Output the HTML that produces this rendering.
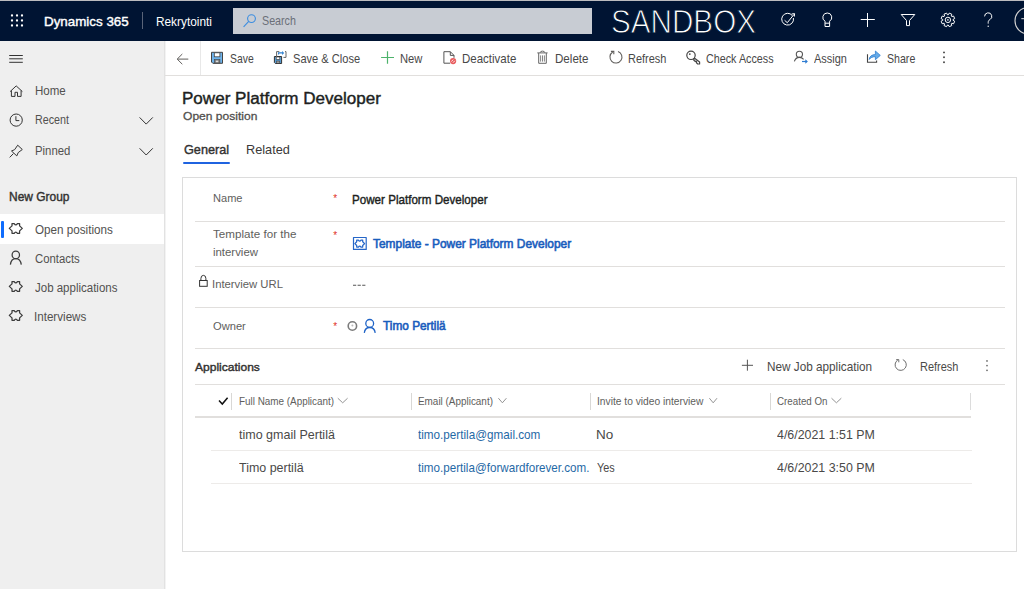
<!DOCTYPE html>
<html><head><meta charset="utf-8"><title>Power Platform Developer</title>
<style>
html,body{margin:0;padding:0;width:1024px;height:589px;overflow:hidden;background:#fff;font-family:"Liberation Sans",sans-serif;}
.a{position:absolute;}
.t{position:absolute;white-space:pre;line-height:normal;transform-origin:0 0;font-family:"Liberation Sans",sans-serif;}
svg{position:absolute;overflow:visible;}
</style></head><body>
<div class="a" style="left:0;top:0;width:1024px;height:1px;background:#bcbcbf"></div>
<div class="a" style="left:0;top:1px;width:1024px;height:40px;background:#001433"></div>
<div class="a" style="left:142px;top:12px;width:1px;height:17px;background:#5a6478"></div>
<div class="a" style="left:233px;top:8px;width:358.8px;height:25.6px;background:#c8ccd3"></div>
<div class="a" style="left:0;top:41px;width:164px;height:548px;background:#efefef"></div>
<div class="a" style="left:164px;top:41px;width:1px;height:548px;background:#e2e2e2"></div>
<div class="a" style="left:165px;top:41px;width:1px;height:548px;background:#f3f3f3"></div>
<div class="a" style="left:165px;top:75px;width:859px;height:1px;background:#e1dfdd"></div>
<div class="a" style="left:200px;top:41px;width:1px;height:34px;background:#e8e8e8"></div>
<div class="a" style="left:0;top:214px;width:164px;height:30px;background:#fff"></div>
<div class="a" style="left:1px;top:221px;width:3px;height:17px;background:#0f6cfd;border-radius:1px"></div>
<div class="a" style="left:183px;top:162px;width:46.6px;height:2px;background:#1f63e0;border-radius:1px"></div>
<div class="a" style="left:182px;top:177px;width:833px;height:373px;border:1px solid #dcdcdc"></div>
<div class="a" style="left:195px;top:221px;width:810px;height:1px;background:#e1dfdd"></div>
<div class="a" style="left:195px;top:266px;width:810px;height:1px;background:#e1dfdd"></div>
<div class="a" style="left:195px;top:307px;width:810px;height:1px;background:#e1dfdd"></div>
<div class="a" style="left:195px;top:348px;width:810px;height:1px;background:#e1dfdd"></div>
<div class="a" style="left:195px;top:384px;width:810px;height:1px;background:#e1dfdd"></div>
<div class="a" style="left:195px;top:416px;width:776px;height:2px;background:#e1dfdd"></div>
<div class="a" style="left:211px;top:450px;width:761px;height:1px;background:#edebe9"></div>
<div class="a" style="left:211px;top:483px;width:761px;height:1px;background:#edebe9"></div>
<div class="a" style="left:231px;top:393px;width:1px;height:17px;background:#d9d8d6"></div>
<div class="a" style="left:411px;top:393px;width:1px;height:17px;background:#d9d8d6"></div>
<div class="a" style="left:590px;top:393px;width:1px;height:17px;background:#d9d8d6"></div>
<div class="a" style="left:770px;top:393px;width:1px;height:17px;background:#d9d8d6"></div>
<div class="a" style="left:970px;top:393px;width:1px;height:17px;background:#dcdcdc"></div>
<svg width="1024" height="589" viewBox="0 0 1024 589" style="left:0;top:0">
<!-- waffle -->
<g fill="#fff">
<circle cx="12" cy="15.5" r="1.15"/><circle cx="17" cy="15.5" r="1.15"/><circle cx="22" cy="15.5" r="1.15"/>
<circle cx="12" cy="20.5" r="1.15"/><circle cx="17" cy="20.5" r="1.15"/><circle cx="22" cy="20.5" r="1.15"/>
<circle cx="12" cy="25.5" r="1.15"/><circle cx="17" cy="25.5" r="1.15"/><circle cx="22" cy="25.5" r="1.15"/>
</g>
<!-- search icon -->
<g fill="none" stroke="#3b8de0" stroke-width="1.1">
<circle cx="251.5" cy="18.6" r="3.9"/>
<path d="M248.7 21.4 L243.6 26.9"/>
</g>
<!-- header icons -->
<g fill="none" stroke="#fff" stroke-width="1">
<path d="M792.3 15.6 A5.9 5.9 0 1 0 793.4 18"/>
<path d="M784.6 20.3 L787.3 22.7 L794.2 14.2"/>
<path d="M791.6 14 L794.6 13.6 L794.3 16.6"/>
<path d="M827.3 13 a4.4 4.4 0 0 1 2.3 8.2 v5.3 h-4.6 v-5.3 a4.4 4.4 0 0 1 2.3 -8.2 z"/>
<path d="M825 23.2 h4.6"/>
<path d="M867.5 13 V27 M860.7 19.5 H874.8"/>
<path d="M901.2 14.5 H914.8 L909.5 20.5 V25.6 H906.5 V20.5 Z"/>
<path d="M984.6 16.4 a3.6 3.6 0 1 1 5.3 3.2 c-1.3 .8 -1.7 1.5 -1.7 3 v1"/>
<circle cx="1028.2" cy="20.7" r="13.2" stroke="#d0d0d0" stroke-width="1.15"/>
</g>
<circle cx="988.2" cy="26.2" r=".7" fill="#fff"/>
<!-- gear -->
<g transform="translate(947.9 19.9)" fill="none" stroke="#fff" stroke-width="1">
<path d="M0.37 -5.09 L1.32 -6.77 L3.85 -5.72 L3.33 -3.86 L3.86 -3.33 L5.72 -3.85 L6.77 -1.32 L5.09 -0.37 L5.09 0.37 L6.77 1.32 L5.72 3.85 L3.86 3.33 L3.33 3.86 L3.85 5.72 L1.32 6.77 L0.37 5.09 L-0.37 5.09 L-1.32 6.77 L-3.85 5.72 L-3.33 3.86 L-3.86 3.33 L-5.72 3.85 L-6.77 1.32 L-5.09 0.37 L-5.09 -0.37 L-6.77 -1.32 L-5.72 -3.85 L-3.86 -3.33 L-3.33 -3.86 L-3.85 -5.72 L-1.32 -6.77 L-0.37 -5.09 Z"/>
<circle r="2.7"/>
<circle r=".8" fill="#fff" stroke="none"/>
</g>
<!-- avatar T bar -->
<path d="M1021.3 18.7 H1024" stroke="#e0e0e0" stroke-width="1"/>

<!-- back arrow -->
<g fill="none" stroke="#605e5c" stroke-width="1">
<path d="M182.3 54 L177.2 59.1 L182.3 64.2 M177.4 59.1 H188.3"/>
</g>
<!-- save floppy -->
<g>
<path d="M211.5 52.3 H222.5 V63.3 H212.8 L211.5 62 Z" fill="#6fb3ea" stroke="#444" stroke-width="1"/>
<rect x="214.3" y="52.8" width="5.6" height="4" fill="#fff" stroke="#444" stroke-width=".8"/>
<rect x="214.5" y="59.6" width="5.4" height="3.5" fill="#777" stroke="#444" stroke-width=".6"/>
<rect x="215.8" y="60.6" width="2.5" height="1.6" fill="#ddd"/>
</g>
<!-- save & close -->
<g>
<path d="M274.4 56.5 H281.6 V63.5 H275.4 L274.4 62.5 Z" fill="#5a9fd6" stroke="#333" stroke-width="1"/>
<rect x="276.2" y="57" width="3.6" height="2.4" fill="#fff" stroke="#333" stroke-width=".6"/>
<rect x="276.4" y="61" width="3.4" height="2.3" fill="#999" stroke="#333" stroke-width=".5"/>
<path d="M276.6 57 V51.6 H279.3" fill="none" stroke="#666" stroke-width="1"/>
<path d="M283.4 57.4 H286 V51.6 H285" fill="none" stroke="#666" stroke-width="1"/>
<path d="M278.6 54.6 V52.9 H282.6" fill="none" stroke="#2b7fd0" stroke-width="1.1"/>
<path d="M282.1 50.9 L284.2 52.9 L282.1 54.9 Z" fill="#2b7fd0"/>
</g>
<!-- new plus green -->
<path d="M387.5 51.2 V63.8 M381.1 57.5 H394" stroke="#4db36b" stroke-width="1.2" fill="none"/>
<!-- deactivate -->
<g fill="none" stroke="#555" stroke-width="1">
<path d="M450.2 63.2 H443.9 V51.7 H450.3 L454 55.4 V57.8"/>
<path d="M450.3 51.7 V55.4 H454"/>
</g>
<circle cx="453.1" cy="61.1" r="3.1" fill="#e85a5c"/>
<path d="M451.3 61.6 L453.2 59.6 M453 62.7 L454.9 60.7" stroke="#fff" stroke-width=".9"/>
<!-- delete -->
<g fill="none" stroke="#666" stroke-width="1">
<path d="M537.3 52.9 H547.6"/>
<path d="M540.3 52.6 a2.1 1.4 0 0 1 4.4 0"/>
<path d="M538.7 53 V63.3 H546.3 V53"/>
<path d="M540.6 55.4 V61.6 M542.5 55.4 V61.6 M544.4 55.4 V61.6" stroke-width=".8"/>
</g>
<!-- refresh -->
<g fill="none" stroke="#605e5c" stroke-width="1.1">
<path d="M618 51.4 A6 6 0 1 1 612.7 52"/>
<path d="M610.9 51.4 H613.8 V54.3"/>
</g>
<!-- key -->
<g fill="none" stroke="#444" stroke-width="1.2">
<circle cx="691" cy="55.3" r="4.2"/>
<path d="M694.3 58 L699.6 62 V64 H697.7 L696.3 62.6 L696.7 61.9 L695.8 61 L695.1 61.4 L693.7 60 L694.1 59.3 L693.2 58.6" stroke-linejoin="round"/>
</g>
<circle cx="689.8" cy="54.1" r=".9" fill="#444"/>
<!-- assign -->
<g fill="none" stroke="#555" stroke-width="1.1">
<circle cx="799.4" cy="54.3" r="3.1"/>
<path d="M794.4 61.4 C795.3 58.5 797.2 57.4 799.4 57.4 C801 57.4 802.5 58 803.6 59.3"/>
</g>
<path d="M802 61.5 H807" stroke="#2d7bd1" stroke-width="1.2"/>
<path d="M805.3 59.2 L807.9 61.5 L805.3 63.8 Z" fill="#2d7bd1"/>
<!-- share -->
<path d="M867.5 54.2 V62.3 H876.6 V60.6" fill="none" stroke="#444" stroke-width="1.1"/>
<path d="M869.2 59.5 C869.4 56.5 871.8 54.6 875.4 54.6 V51 L880.3 55.4 L875.4 59.7 V56.7 C872.6 56.7 870.6 57.6 869.2 59.5 Z" fill="#66abe8" stroke="#2f7fd0" stroke-width=".8"/>
<!-- more -->
<g fill="#444"><circle cx="944" cy="52.4" r=".95"/><circle cx="944" cy="57.3" r=".95"/><circle cx="944" cy="62.3" r=".95"/></g>

<!-- nav icons -->
<g fill="none" stroke="#333" stroke-width="1">
<path d="M9.2 55.5 H22.8 M9.2 58.8 H22.8 M9.2 62.3 H22.8"/>
<path d="M10.1 91.6 L16.2 85.9 L22.4 91.6 M11.4 90.6 V96.4 H15 V92.3 H17.5 V96.4 H21.1 V90.6"/>
<circle cx="16.2" cy="120.1" r="6.1"/>
<path d="M15.9 116.2 V120.6 H19.3"/>
<path d="M9.7 157.4 L13.4 153.6"/>
<path d="M11.5 151 L14.6 149.7 L17.7 145.2 L22.3 149.5 L18.2 152.6 L16.8 155.9 Z"/>
<path d="M139.6 117.4 L146.2 124.1 L152.8 117.4"/>
<path d="M139.6 148.3 L146.2 155 L152.8 148.3"/>
</g>
<g fill="none" stroke="#3b3b3b" stroke-width="1.25">
<path d="M12 223.6 H14.2 Q15.8 226.2 17.4 223.6 H19.6 V225.9 L22.3 228.4 L19.6 230.9 V233.3 H17.4 Q15.8 230.7 14.2 233.3 H12 V230.9 L9.3 228.4 L12 225.9 Z" stroke-linejoin="round"/>
<circle cx="15.8" cy="254.9" r="3.7"/>
<path d="M10.4 264.6 C10.9 261 13 258.7 15.8 258.7 C18.6 258.7 20.7 261 21.3 264.6"/>
<path d="M12 281.6 H14.2 Q15.8 284.2 17.4 281.6 H19.6 V283.9 L22.3 286.4 L19.6 288.9 V291.3 H17.4 Q15.8 288.7 14.2 291.3 H12 V288.9 L9.3 286.4 L12 283.9 Z" stroke-linejoin="round"/>
<path d="M12 310.6 H14.2 Q15.8 313.2 17.4 310.6 H19.6 V312.9 L22.3 315.4 L19.6 317.9 V320.3 H17.4 Q15.8 317.7 14.2 320.3 H12 V317.9 L9.3 315.4 L12 312.9 Z" stroke-linejoin="round"/>
</g>

<!-- form icons -->
<g fill="none" stroke="#333" stroke-width="1">
<rect x="199.6" y="280.5" width="7.6" height="5.8"/>
<path d="M200.9 280.5 V278.6 A2 2.6 0 0 1 205.9 278.6 V280.5"/>
</g>
<g fill="#e0301e">
<text x="333.3" y="201.6" font-family="Liberation Sans" font-size="10">*</text>
<text x="333.3" y="238.6" font-family="Liberation Sans" font-size="10">*</text>
<text x="333.3" y="329.6" font-family="Liberation Sans" font-size="10">*</text>
</g>
<path d="M353 285.2 h3.2 M357.6 285.2 h3.2 M362.2 285.2 h3.2" stroke="#555" stroke-width="1.1"/>
<g fill="none" stroke="#2566c8" stroke-width="1.2" stroke-linejoin="round">
<rect x="353.5" y="237.5" width="12.7" height="11.9"/>
<path d="M356.7 240.1 H358.4 Q359.7 242.1 361 240.1 H362.7 V241.7 L364.6 243.6 L362.7 245.5 V247.1 H361 Q359.7 245.1 358.4 247.1 H356.7 V245.5 L354.9 243.6 L356.7 241.7 Z" stroke-width="1.25"/>
</g>
<circle cx="352.4" cy="326" r="4.2" fill="none" stroke="#7c7c7c" stroke-width="1.6"/>
<circle cx="352.4" cy="325.4" r="1" fill="#bbb"/>
<g fill="none" stroke="#1f63c6" stroke-width="1.3">
<circle cx="369.7" cy="323.4" r="3.9"/>
<path d="M364.3 332.8 C364.7 329.5 366.8 327.5 369.7 327.5 C372.6 327.5 374.8 329.5 375.2 332.8"/>
</g>

<!-- subgrid icons -->
<path d="M747.4 359.7 V370.7 M741.9 365.3 H753" stroke="#555" stroke-width="1" fill="none"/>
<g fill="none" stroke="#666" stroke-width=".95">
<path d="M902.8 359.6 A5.6 5.6 0 1 1 897.8 360"/>
<path d="M896.2 359.6 H898.8 V362.3"/>
</g>
<g fill="#666"><circle cx="987" cy="360.9" r=".85"/><circle cx="987" cy="365.6" r=".85"/><circle cx="987" cy="370.3" r=".85"/></g>
<path d="M219 400.5 L222.3 404.1 L227.6 397.8" fill="none" stroke="#111" stroke-width="1.5"/>
<g fill="none" stroke="#888" stroke-width=".9">
<path d="M337.8 398.2 L342.7 402.8 L347.6 398.2"/>
<path d="M498.4 398.2 L502.4 402.8 L506.4 398.2"/>
<path d="M709.4 398.2 L713.2 402.8 L717 398.2"/>
<path d="M831.5 398.2 L836.4 402.8 L841.3 398.2"/>
</g>
</svg>

<span class="t" style="left:44.09px;top:13.85px;font-size:13.2px;font-weight:400;color:#fff;transform:scaleX(1.0143);-webkit-text-stroke:0.4px #fff">Dynamics 365</span>
<span class="t" style="left:155.85px;top:14.58px;font-size:12.4px;font-weight:400;color:#fff;transform:scaleX(0.9546)">Rekrytointi</span>
<span class="t" style="left:262.00px;top:13.68px;font-size:12.4px;font-weight:400;color:#6b6f78;transform:scaleX(0.8636)">Search</span>
<span class="t" style="left:610.63px;top:2.03px;font-size:34.0px;font-weight:400;color:#fff;transform:scaleX(0.8719);-webkit-text-stroke:1px #001433">SANDBOX</span>
<span class="t" style="left:229.80px;top:51.32px;font-size:12.8px;font-weight:400;color:#484848;transform:scaleX(0.8124)">Save</span>
<span class="t" style="left:293.00px;top:51.32px;font-size:12.8px;font-weight:400;color:#484848;transform:scaleX(0.8655)">Save &amp; Close</span>
<span class="t" style="left:399.52px;top:51.32px;font-size:12.8px;font-weight:400;color:#484848;transform:scaleX(0.8754)">New</span>
<span class="t" style="left:461.60px;top:51.32px;font-size:12.8px;font-weight:400;color:#484848;transform:scaleX(0.8982)">Deactivate</span>
<span class="t" style="left:555.29px;top:51.32px;font-size:12.8px;font-weight:400;color:#484848;transform:scaleX(0.9059)">Delete</span>
<span class="t" style="left:627.94px;top:51.32px;font-size:12.8px;font-weight:400;color:#484848;transform:scaleX(0.8560)">Refresh</span>
<span class="t" style="left:706.00px;top:51.32px;font-size:12.8px;font-weight:400;color:#484848;transform:scaleX(0.8404)">Check Access</span>
<span class="t" style="left:814.00px;top:51.32px;font-size:12.8px;font-weight:400;color:#484848;transform:scaleX(0.8566)">Assign</span>
<span class="t" style="left:887.00px;top:51.32px;font-size:12.8px;font-weight:400;color:#484848;transform:scaleX(0.8287)">Share</span>
<span class="t" style="left:34.66px;top:84.17px;font-size:12.3px;font-weight:400;color:#52514f;transform:scaleX(0.9386)">Home</span>
<span class="t" style="left:34.73px;top:113.27px;font-size:12.3px;font-weight:400;color:#52514f;transform:scaleX(0.8717)">Recent</span>
<span class="t" style="left:34.68px;top:143.87px;font-size:12.3px;font-weight:400;color:#52514f;transform:scaleX(0.9239)">Pinned</span>
<span class="t" style="left:8.73px;top:190.17px;font-size:12.3px;font-weight:400;color:#323130;transform:scaleX(0.9714);-webkit-text-stroke:0.4px #323130">New Group</span>
<span class="t" style="left:34.90px;top:223.07px;font-size:12.3px;font-weight:400;color:#52514f;transform:scaleX(0.9489)">Open positions</span>
<span class="t" style="left:34.90px;top:251.77px;font-size:12.3px;font-weight:400;color:#52514f;transform:scaleX(0.9219)">Contacts</span>
<span class="t" style="left:34.90px;top:280.87px;font-size:12.3px;font-weight:400;color:#52514f;transform:scaleX(0.9348)">Job applications</span>
<span class="t" style="left:33.96px;top:310.17px;font-size:12.3px;font-weight:400;color:#52514f;transform:scaleX(0.9446)">Interviews</span>
<span class="t" style="left:182.12px;top:90.00px;font-size:15.8px;font-weight:400;color:#201f1e;transform:scaleX(1.0791);-webkit-text-stroke:0.4px #201f1e">Power Platform Developer</span>
<span class="t" style="left:182.70px;top:110.23px;font-size:10.8px;font-weight:400;color:#52504e;transform:scaleX(1.1168);-webkit-text-stroke:0.28px #52504e">Open position</span>
<span class="t" style="left:183.60px;top:142.07px;font-size:13.4px;font-weight:400;color:#323130;transform:scaleX(0.9462);-webkit-text-stroke:0.4px #323130">General</span>
<span class="t" style="left:246.05px;top:142.07px;font-size:13.4px;font-weight:400;color:#3b3a39;transform:scaleX(0.9506)">Related</span>
<span class="t" style="left:212.90px;top:191.12px;font-size:11.8px;font-weight:400;color:#605e5c;transform:scaleX(0.9371)">Name</span>
<span class="t" style="left:212.60px;top:227.12px;font-size:11.8px;font-weight:400;color:#605e5c;transform:scaleX(0.9867)">Template for the</span>
<span class="t" style="left:212.60px;top:245.22px;font-size:11.8px;font-weight:400;color:#605e5c;transform:scaleX(0.9654)">interview</span>
<span class="t" style="left:211.64px;top:276.72px;font-size:11.8px;font-weight:400;color:#605e5c;transform:scaleX(0.9575)">Interview URL</span>
<span class="t" style="left:212.60px;top:319.02px;font-size:11.8px;font-weight:400;color:#605e5c;transform:scaleX(0.9449)">Owner</span>
<span class="t" style="left:351.95px;top:192.96px;font-size:12.2px;font-weight:400;color:#201f1e;transform:scaleX(0.9533);-webkit-text-stroke:0.4px #201f1e">Power Platform Developer</span>
<span class="t" style="left:372.70px;top:236.96px;font-size:12.2px;font-weight:400;color:#1a5dbd;transform:scaleX(0.9784);-webkit-text-stroke:0.6px #1a5dbd">Template - Power Platform Developer</span>
<span class="t" style="left:383.10px;top:319.16px;font-size:12.2px;font-weight:400;color:#1a5dbd;transform:scaleX(0.9709);-webkit-text-stroke:0.6px #1a5dbd">Timo Pertilä</span>
<span class="t" style="left:195.20px;top:359.80px;font-size:11.6px;font-weight:400;color:#323130;transform:scaleX(1.0380);-webkit-text-stroke:0.4px #323130">Applications</span>
<span class="t" style="left:766.64px;top:359.66px;font-size:12.2px;font-weight:400;color:#4a4948;transform:scaleX(0.9637)">New Job application</span>
<span class="t" style="left:919.60px;top:359.66px;font-size:12.2px;font-weight:400;color:#4a4948;transform:scaleX(0.8998)">Refresh</span>
<span class="t" style="left:238.60px;top:395.03px;font-size:10.8px;font-weight:400;color:#605e5c;transform:scaleX(0.9156)">Full Name (Applicant)</span>
<span class="t" style="left:417.80px;top:395.03px;font-size:10.8px;font-weight:400;color:#605e5c;transform:scaleX(0.9184)">Email (Applicant)</span>
<span class="t" style="left:596.55px;top:395.03px;font-size:10.8px;font-weight:400;color:#605e5c;transform:scaleX(0.9477)">Invite to video interview</span>
<span class="t" style="left:776.60px;top:395.03px;font-size:10.8px;font-weight:400;color:#605e5c;transform:scaleX(0.9049)">Created On</span>
<span class="t" style="left:238.60px;top:427.86px;font-size:12.2px;font-weight:400;color:#4a4948;transform:scaleX(1.0258)">timo gmail Pertilä</span>
<span class="t" style="left:418.30px;top:427.86px;font-size:12.2px;font-weight:400;color:#1f69a6;transform:scaleX(0.9595)">timo.pertila@gmail.com</span>
<span class="t" style="left:596.09px;top:427.86px;font-size:12.2px;font-weight:400;color:#4a4948;transform:scaleX(1.1080)">No</span>
<span class="t" style="left:776.60px;top:427.86px;font-size:12.2px;font-weight:400;color:#4a4948;transform:scaleX(1.0170)">4/6/2021 1:51 PM</span>
<span class="t" style="left:238.60px;top:460.96px;font-size:12.2px;font-weight:400;color:#4a4948;transform:scaleX(1.0216)">Timo pertilä</span>
<span class="t" style="left:418.30px;top:460.96px;font-size:12.2px;font-weight:400;color:#1f69a6;transform:scaleX(0.9544)">timo.pertila@forwardforever.com.</span>
<span class="t" style="left:597.20px;top:460.96px;font-size:12.2px;font-weight:400;color:#4a4948;transform:scaleX(0.8895)">Yes</span>
<span class="t" style="left:776.60px;top:460.96px;font-size:12.2px;font-weight:400;color:#4a4948;transform:scaleX(1.0170)">4/6/2021 3:50 PM</span>
</body></html>
